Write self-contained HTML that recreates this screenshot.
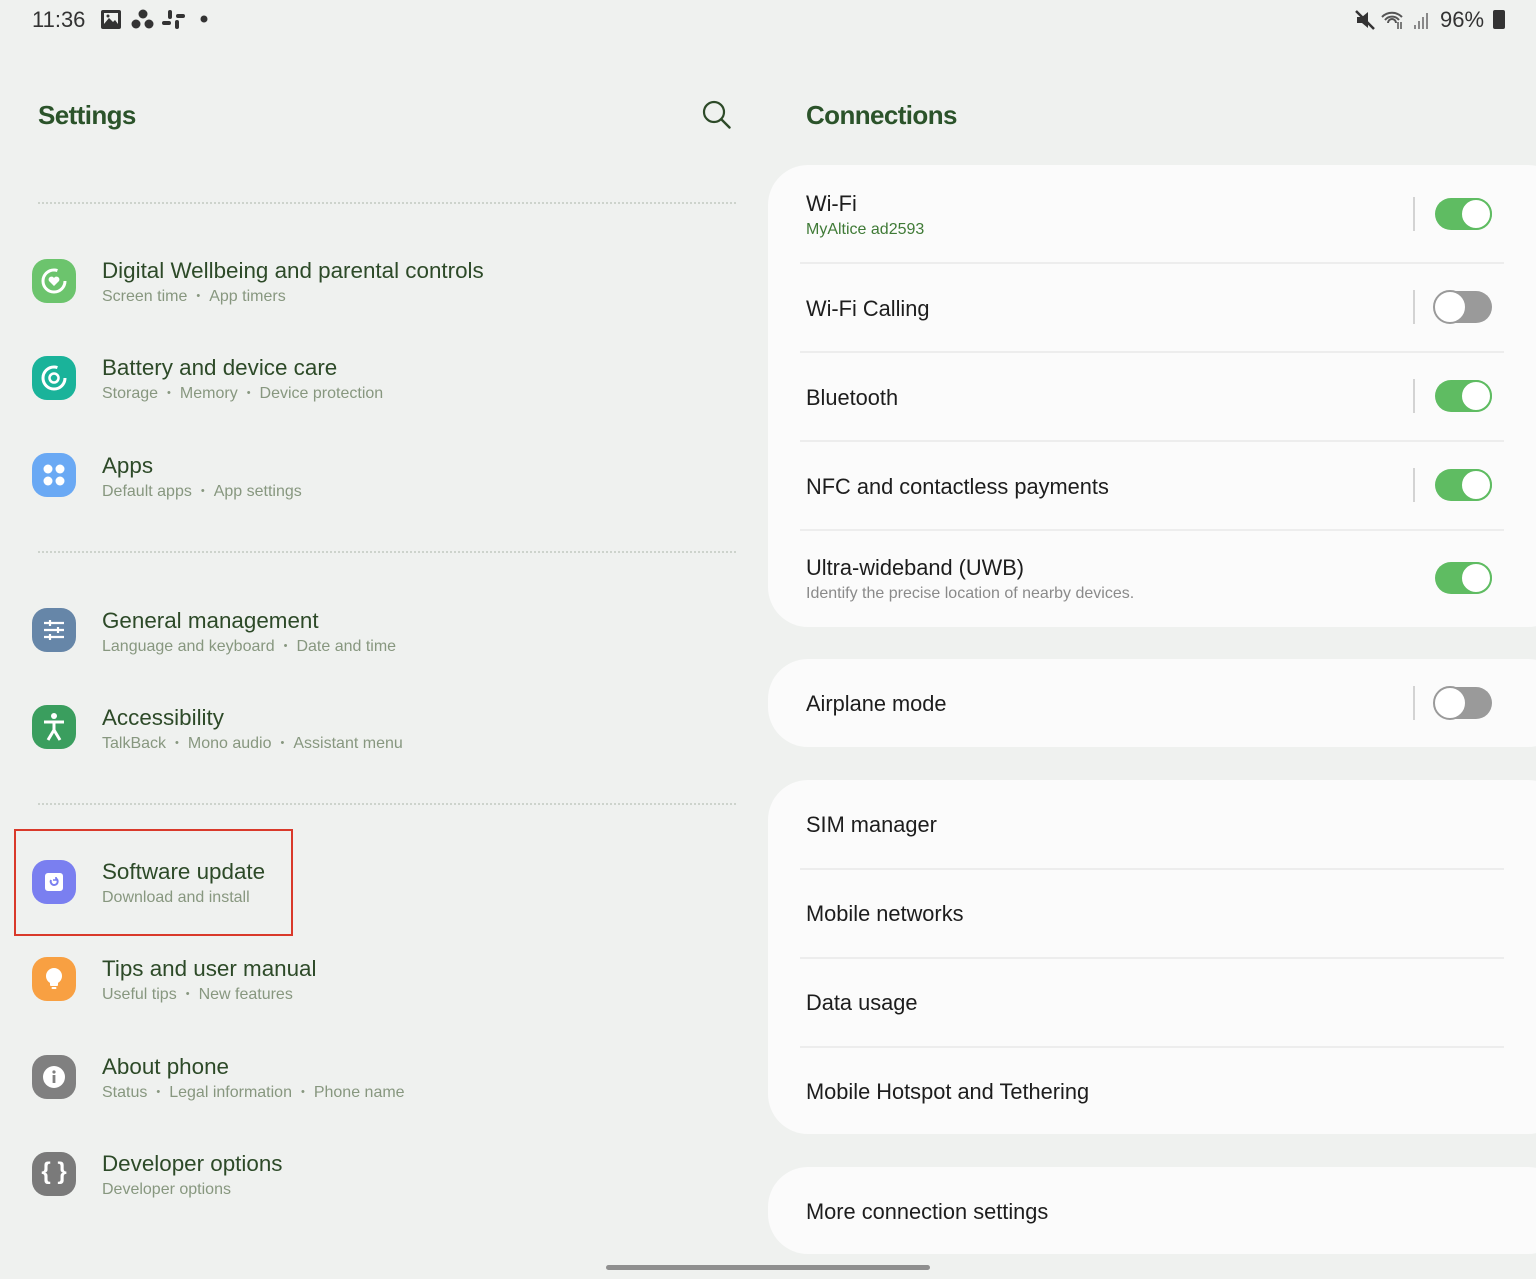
<!DOCTYPE html>
<html><head><meta charset="utf-8"><style>
*{margin:0;padding:0;box-sizing:border-box}
body{width:1536px;height:1279px;background:#eff1ef;font-family:"Liberation Sans",sans-serif;position:relative;overflow:hidden}
.a{position:absolute;white-space:nowrap}
.t{color:#2d4a28;font-size:22.4px}
.s{color:#87977f;font-size:16px}
.dot{margin:0 9px;font-size:11px;position:relative;top:-2px}
.ic{position:absolute;left:32px;width:44px;height:44px;border-radius:15px}
.hr{position:absolute;left:38px;width:698px;border-top:2px dotted #cdd3cc}
.card{position:absolute;left:768px;width:800px;background:#fbfbfb;border-radius:40px}
.rt{color:#1d1d1d;font-size:21.8px}
.dv{position:absolute;left:800px;width:704px;height:2px;background:#ededed}
.sep{position:absolute;left:1413px;width:2px;height:34px;background:#d3d3d3}
.tg{position:absolute;left:1435px;width:57px;height:32px;border-radius:16px}
.on{background:#5fbc62}
.on::after{content:"";position:absolute;right:0;top:0;width:32px;height:32px;border-radius:50%;background:#fff;border:2px solid #5fbc62;box-sizing:border-box}
.off{background:#9a9a9a}
.off::after{content:"";position:absolute;left:-2px;top:-1px;width:34px;height:34px;border-radius:50%;background:#fff;border:2px solid #9a9a9a;box-sizing:border-box}
</style></head><body>
<div class="a" style="left:32px;top:7px;font-size:22px;color:#333">11:36</div>
<svg class="a" style="left:100px;top:8px" width="112" height="24" viewBox="0 0 112 24">
<rect x="1" y="2" width="20" height="19" rx="2" fill="#333"/><rect x="4" y="5" width="14" height="11" fill="#eff1ef"/><path d="M4 16l5-6 4 4 2-2 3 4z" fill="#333"/><circle cx="8" cy="8" r="1.5" fill="#333"/>
<circle cx="43" cy="6" r="4.5" fill="#333"/><circle cx="36" cy="16" r="4.5" fill="#333"/><circle cx="49" cy="16" r="4.5" fill="#333"/>
<g fill="#333"><rect x="68" y="2" width="4" height="9" rx="2"/><rect x="75" y="12" width="4" height="9" rx="2"/><rect x="62" y="13" width="9" height="4" rx="2"/><rect x="76" y="6" width="9" height="4" rx="2"/></g>
<circle cx="104" cy="11" r="3.5" fill="#333"/></svg>
<svg class="a" style="left:1354px;top:8px" width="80" height="24" viewBox="0 0 80 24">
<path d="M3 9h5l6-5v16l-6-5H3z" fill="#333"/><path d="M2 3l18 18" stroke="#333" stroke-width="2.5"/>
<path d="M28 9a14 14 0 0 1 20 0M31 12a9 9 0 0 1 14 0M34 15a4 4 0 0 1 8 0" stroke="#555" stroke-width="2" fill="none"/><path d="M44 14v7M47 14v7" stroke="#555" stroke-width="1.5"/>
<g fill="#888"><rect x="60" y="17" width="2" height="4"/><rect x="64" y="13" width="2" height="8"/><rect x="68" y="9" width="2" height="12"/><rect x="72" y="5" width="2" height="16"/></g></svg>
<div class="a" style="left:1440px;top:7px;font-size:22px;color:#333">96%</div>
<div class="a" style="left:1493px;top:10px;width:12px;height:19px;background:#333;border-radius:2px"></div>

<div class="a" style="left:38px;top:100px;font-size:26px;color:#2b532a;font-weight:bold;letter-spacing:-0.6px">Settings</div>
<svg class="a" style="left:701px;top:99px" width="32" height="32" viewBox="0 0 32 32"><circle cx="13" cy="13" r="10" stroke="#2d4a28" stroke-width="2.2" fill="none"/><path d="M20.5 20.5l8 8" stroke="#2d4a28" stroke-width="2.4" stroke-linecap="round"/></svg>
<div class="a" style="left:806px;top:100px;font-size:26px;color:#2b532a;font-weight:bold;letter-spacing:-0.6px">Connections</div>

<div class="hr" style="top:202px"></div>
<div class="hr" style="top:551px"></div>
<div class="hr" style="top:803px"></div>

<div class="ic" style="top:259px;background:#6cc46d"></div>
<svg class="a" style="left:32px;top:259px" width="44" height="44"><circle cx="22" cy="22" r="11" stroke="#fff" stroke-width="3" fill="none" stroke-dasharray="55 14"/><path d="M22 27l-5-5a2.5 2.5 0 0 1 5-3 2.5 2.5 0 0 1 5 3z" fill="#fff"/></svg>
<div class="a t" style="left:102px;top:258px">Digital Wellbeing and parental controls</div>
<div class="a s" style="left:102px;top:288px">Screen time<span class="dot">•</span>App timers</div>

<div class="ic" style="top:356px;background:#1ab39a"></div>
<svg class="a" style="left:32px;top:356px" width="44" height="44"><circle cx="22" cy="22" r="11" stroke="#fff" stroke-width="3" fill="none" stroke-dasharray="55 14"/><circle cx="22" cy="22" r="4.5" stroke="#fff" stroke-width="2.5" fill="none"/></svg>
<div class="a t" style="left:102px;top:355px">Battery and device care</div>
<div class="a s" style="left:102px;top:385px">Storage<span class="dot">•</span>Memory<span class="dot">•</span>Device protection</div>

<div class="ic" style="top:453px;background:#6aa9f4"></div>
<svg class="a" style="left:32px;top:453px" width="44" height="44" fill="#fff"><circle cx="16" cy="16" r="4.5"/><circle cx="28" cy="16" r="4.5"/><circle cx="16" cy="28" r="4.5"/><circle cx="28" cy="28" r="4.5"/></svg>
<div class="a t" style="left:102px;top:453px">Apps</div>
<div class="a s" style="left:102px;top:483px">Default apps<span class="dot">•</span>App settings</div>

<div class="ic" style="top:608px;background:#6686a8"></div>
<svg class="a" style="left:32px;top:608px" width="44" height="44" stroke="#fff" stroke-width="2.2"><path d="M12 15h20M12 22h20M12 29h20"/><path d="M18 12v6M26 19v6M18 26v6"/></svg>
<div class="a t" style="left:102px;top:608px">General management</div>
<div class="a s" style="left:102px;top:638px">Language and keyboard<span class="dot">•</span>Date and time</div>

<div class="ic" style="top:705px;background:#3a9e5e"></div>
<svg class="a" style="left:32px;top:705px" width="44" height="44"><circle cx="22" cy="11" r="3" fill="#fff"/><path d="M12 17h20M22 17v8l-6 10M22 25l6 10" stroke="#fff" stroke-width="3" fill="none"/></svg>
<div class="a t" style="left:102px;top:705px">Accessibility</div>
<div class="a s" style="left:102px;top:735px">TalkBack<span class="dot">•</span>Mono audio<span class="dot">•</span>Assistant menu</div>

<div class="a" style="left:14px;top:829px;width:279px;height:107px;border:2px solid #d9392a"></div>
<div class="ic" style="top:860px;background:#7a7ff0"></div>
<svg class="a" style="left:32px;top:860px" width="44" height="44"><rect x="13" y="13" width="18" height="18" rx="3" fill="#fff"/><path d="M19 20a3.5 3.5 0 1 0 5-1.5" stroke="#7a7ff0" stroke-width="2" fill="none"/><path d="M24 17v3h-3" stroke="#7a7ff0" stroke-width="1.6" fill="none"/></svg>
<div class="a t" style="left:102px;top:859px">Software update</div>
<div class="a s" style="left:102px;top:889px">Download and install</div>

<div class="ic" style="top:957px;background:#f8a042"></div>
<svg class="a" style="left:32px;top:957px" width="44" height="44" fill="#fff"><circle cx="22" cy="19" r="8"/><rect x="18" y="24" width="8" height="5" rx="1"/><rect x="19.5" y="30" width="5" height="2" rx="1"/></svg>
<div class="a t" style="left:102px;top:956px">Tips and user manual</div>
<div class="a s" style="left:102px;top:986px">Useful tips<span class="dot">•</span>New features</div>

<div class="ic" style="top:1055px;background:#808080"></div>
<svg class="a" style="left:32px;top:1055px" width="44" height="44"><circle cx="22" cy="22" r="11" fill="#fff"/><circle cx="22" cy="17" r="1.6" fill="#808080"/><rect x="20.6" y="20" width="2.8" height="8" fill="#808080"/></svg>
<div class="a t" style="left:102px;top:1054px">About phone</div>
<div class="a s" style="left:102px;top:1084px">Status<span class="dot">•</span>Legal information<span class="dot">•</span>Phone name</div>

<div class="ic" style="top:1152px;background:#7a7a7a"></div>
<div class="a" style="left:32px;top:1158px;width:44px;text-align:center;color:#fff;font-size:24px;font-weight:bold">{ }</div>
<div class="a t" style="left:102px;top:1151px">Developer options</div>
<div class="a s" style="left:102px;top:1181px">Developer options</div>

<div class="card" style="top:165px;height:462px"></div>
<div class="a rt" style="left:806px;top:191px">Wi-Fi</div>
<div class="a" style="left:806px;top:221px;font-size:16px;color:#3f7a36">MyAltice ad2593</div>
<div class="sep" style="top:197px"></div><div class="tg on" style="top:198px"></div>
<div class="dv" style="top:262px"></div>
<div class="a rt" style="left:806px;top:296px">Wi-Fi Calling</div>
<div class="sep" style="top:290px"></div><div class="tg off" style="top:291px"></div>
<div class="dv" style="top:351px"></div>
<div class="a rt" style="left:806px;top:385px">Bluetooth</div>
<div class="sep" style="top:379px"></div><div class="tg on" style="top:380px"></div>
<div class="dv" style="top:440px"></div>
<div class="a rt" style="left:806px;top:474px">NFC and contactless payments</div>
<div class="sep" style="top:468px"></div><div class="tg on" style="top:469px"></div>
<div class="dv" style="top:529px"></div>
<div class="a rt" style="left:806px;top:555px">Ultra-wideband (UWB)</div>
<div class="a" style="left:806px;top:585px;font-size:16px;color:#8a8a8a">Identify the precise location of nearby devices.</div>
<div class="tg on" style="top:562px"></div>

<div class="card" style="top:659px;height:88px"></div>
<div class="a rt" style="left:806px;top:691px">Airplane mode</div>
<div class="sep" style="top:686px"></div><div class="tg off" style="top:687px"></div>

<div class="card" style="top:780px;height:354px"></div>
<div class="a rt" style="left:806px;top:812px">SIM manager</div>
<div class="dv" style="top:868px"></div>
<div class="a rt" style="left:806px;top:901px">Mobile networks</div>
<div class="dv" style="top:957px"></div>
<div class="a rt" style="left:806px;top:990px">Data usage</div>
<div class="dv" style="top:1046px"></div>
<div class="a rt" style="left:806px;top:1079px">Mobile Hotspot and Tethering</div>

<div class="card" style="top:1167px;height:87px"></div>
<div class="a rt" style="left:806px;top:1199px">More connection settings</div>

<div class="a" style="left:606px;top:1265px;width:324px;height:5px;border-radius:3px;background:#8f8f8f"></div>
</body></html>
